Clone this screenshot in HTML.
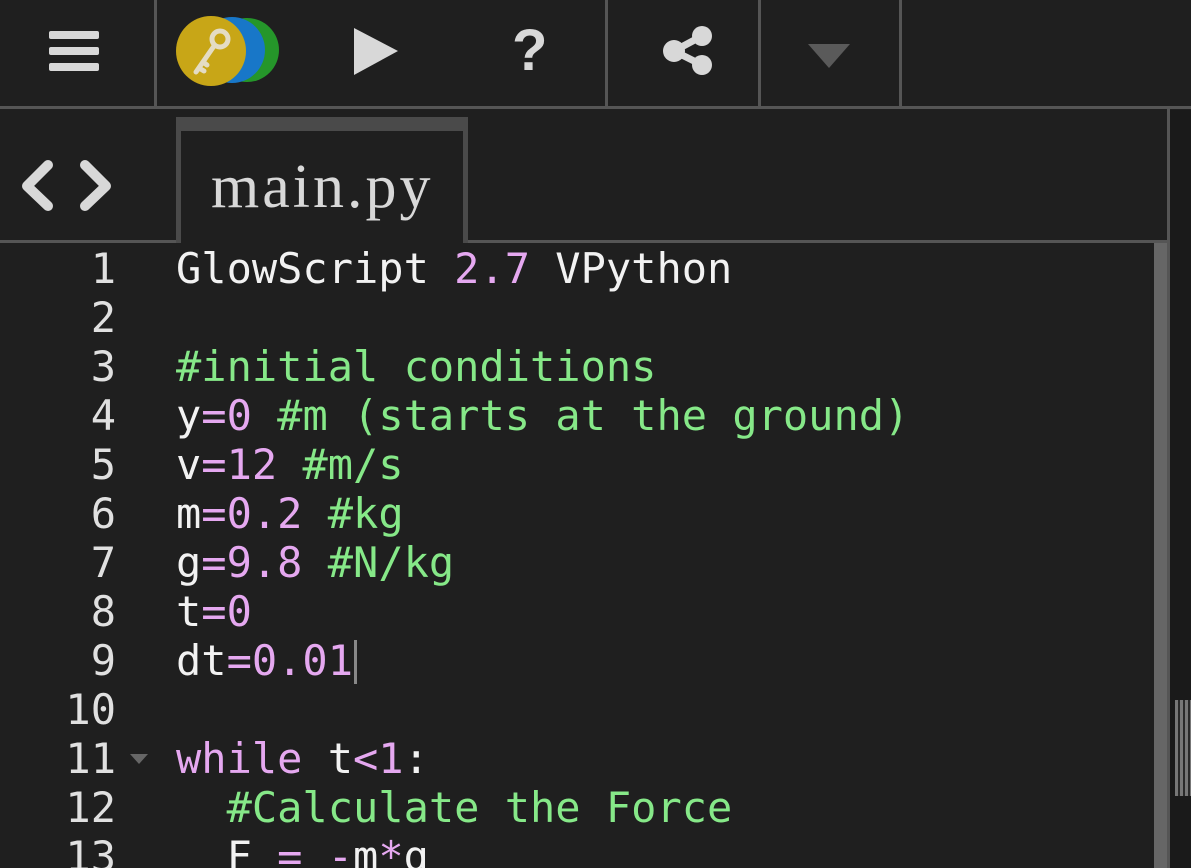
<!DOCTYPE html>
<html><head><style>
html,body{margin:0;padding:0;background:#1f1f1f;width:1191px;height:868px;overflow:hidden;position:relative}
.a{position:absolute}
.code{font-family:"DejaVu Sans Mono","Liberation Mono",monospace;font-size:42px;line-height:49px;white-space:pre;color:#f2f2f2}
.k{color:#e5a8f0}.c{color:#86e888}
</style></head><body>
<div class="a" style="left:0;top:106px;width:1191px;height:3px;background:#555"></div>
<div class="a" style="left:154px;top:0;width:3px;height:107px;background:#555"></div>
<div class="a" style="left:605px;top:0;width:3px;height:107px;background:#555"></div>
<div class="a" style="left:758px;top:0;width:3px;height:107px;background:#555"></div>
<div class="a" style="left:899px;top:0;width:3px;height:107px;background:#555"></div>
<div class="a" style="left:49px;top:31px;width:50px;height:8px;background:#d8d8d8;border-radius:2px"></div>
<div class="a" style="left:49px;top:47px;width:50px;height:8px;background:#d8d8d8;border-radius:2px"></div>
<div class="a" style="left:49px;top:63px;width:50px;height:8px;background:#d8d8d8;border-radius:2px"></div>
<svg class="a" style="left:170px;top:12px" width="115" height="76">
<circle cx="77" cy="38" r="32" fill="#25962a"/>
<circle cx="62" cy="38" r="33" fill="#1877c8"/>
<circle cx="41" cy="39" r="35" fill="#c8a617"/>
<g stroke="#e4dcc4" stroke-width="5" fill="none" stroke-linecap="round"><circle cx="50" cy="27" r="8"/><path d="M44 34 L26 60 M29 56 L34 59 M33 50 L37 53"/></g>
</svg>
<svg class="a" style="left:352px;top:26px" width="48" height="50"><path d="M2 2 L46 25 L2 49Z" fill="#d8d8d8"/></svg>
<div class="a" style="left:512px;top:22px;font:bold 58px 'Liberation Sans',sans-serif;color:#d8d8d8;line-height:1">?</div>
<svg class="a" style="left:662px;top:25px" width="54" height="52"><g fill="#d8d8d8"><circle cx="12" cy="26" r="11"/><circle cx="40" cy="11" r="10"/><circle cx="40" cy="40" r="10"/></g><path d="M12 26 L40 11 M12 26 L40 40" stroke="#d8d8d8" stroke-width="7"/></svg>
<svg class="a" style="left:808px;top:44px" width="44" height="26"><path d="M0 0 L42 0 L21 24Z" fill="#5a5a5a"/></svg>
<svg class="a" style="left:10px;top:160px" width="110" height="54"><g stroke="#d8d8d8" stroke-width="10" fill="none" stroke-linecap="round" stroke-linejoin="round"><path d="M38 5 L17 26 L38 46"/><path d="M75 5 L96 26 L75 46"/></g></svg>
<div class="a" style="left:0;top:240px;width:180px;height:3px;background:#555"></div>
<div class="a" style="left:464px;top:240px;width:706px;height:3px;background:#555"></div>
<div class="a" style="left:1167px;top:108px;width:3px;height:760px;background:#555"></div>
<div class="a" style="left:176px;top:117px;width:292px;height:14px;background:#4a4a4a"></div>
<div class="a" style="left:176px;top:117px;width:5px;height:126px;background:#4a4a4a"></div>
<div class="a" style="left:463px;top:117px;width:5px;height:126px;background:#4a4a4a"></div>
<div class="a" style="left:211px;top:150px;font:62px 'Liberation Serif',serif;color:#d8d8d8;line-height:74px;letter-spacing:3px">main.py</div>
<div class="a" style="left:1154px;top:243px;width:13px;height:625px;background:#666"></div>
<div class="a" style="left:1170px;top:110px;width:21px;height:758px;background:#1a1a1a"></div>
<div class="a" style="left:1175px;top:700px;width:16px;height:96px;background:repeating-linear-gradient(90deg,#777 0 3px,#2a2a2a 3px 5px)"></div>
<div class="a code" style="left:0;top:244px;width:116px;text-align:right;color:#e0e0e0">1
2
3
4
5
6
7
8
9
10
11
12
13</div>
<svg class="a" style="left:130px;top:754px" width="18" height="12"><path d="M0 0 L18 0 L9 10Z" fill="#666"/></svg>
<div class="a code" style="left:176px;top:244px">GlowScript <span class="k">2.7</span> VPython

<span class="c">#initial conditions</span>
y<span class="k">=0</span> <span class="c">#m (starts at the ground)</span>
v<span class="k">=12</span> <span class="c">#m/s</span>
m<span class="k">=0.2</span> <span class="c">#kg</span>
g<span class="k">=9.8</span> <span class="c">#N/kg</span>
t<span class="k">=0</span>
dt<span class="k">=0.01</span>

<span class="k">while</span> t<span class="k">&lt;1</span>:
  <span class="c">#Calculate the Force</span>
  F <span class="k">=</span> <span class="k">-</span>m<span class="k">*</span>g</div>
<div class="a" style="left:354px;top:640px;width:3px;height:44px;background:#888"></div>
</body></html>
